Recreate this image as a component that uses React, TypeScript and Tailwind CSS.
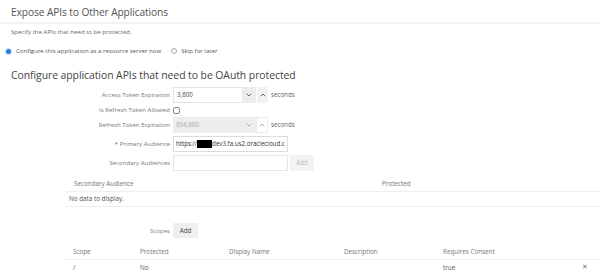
import React from "react";

function Chevron({ dir, color }: { dir: "up" | "down"; color: string }) {
  return (
    <svg width="6" height="4" viewBox="0 0 6 4" fill="none">
      {dir === "down" ? (
        <path d="M0.8 0.8 L3 3 L5.2 0.8" stroke={color} strokeWidth="1" />
      ) : (
        <path d="M0.8 3.2 L3 1 L5.2 3.2" stroke={color} strokeWidth="1" />
      )}
    </svg>
  );
}

function Label({ children }: { children: React.ReactNode }) {
  return (
    <div className="w-[170px] shrink-0 text-right text-[6.1px] leading-[8px] text-[#777]">
      {children}
    </div>
  );
}

export default function App() {
  return (
    <div className="w-[600px] h-[273px] overflow-hidden bg-white font-['Open_Sans','Liberation_Sans',sans-serif] text-[#555]">
      <div className="px-[11px] pt-[5px] pb-[3px] border-b-2 border-[#f3f3f3]">
        <div className="text-[10.2px] leading-[14px] text-[#555] tracking-[-0.1px]">
          Expose APIs to Other Applications
        </div>
      </div>
      <div className="mt-[4px] px-[11px] text-[6.1px] leading-[8px] text-[#666]">
        Specify the APIs that need to be protected.
      </div>
      <div className="mt-[10px] flex h-[10px] items-center pl-[5px] text-[6.1px] text-[#555]">
        <span className="ml-[1px] inline-block h-[5px] w-[5px] rounded-full bg-[#2d7be0] ring-1 ring-[#d3e3f8]" />
        <span className="ml-[5px]">Configure this application as a resource server now</span>
        <span className="ml-[10px] inline-block h-[6px] w-[6px] rounded-full border border-[#aaa]" />
        <span className="ml-[4px]">Skip for later</span>
      </div>
      <div className="mt-[12px] px-[11px] text-[10.4px] leading-[14px] text-[#444] tracking-[-0.05px]">
        Configure application APIs that need to be OAuth protected
      </div>

      <div className="mt-[5px] flex flex-col">
        <div className="flex h-[16px] items-center">
          <Label>Access Token Expiration</Label>
          <div className="ml-[3px] flex h-[16px] items-stretch">
            <div className="flex w-[69px] items-center border border-[#e3e3e3] border-r-0 px-[3px] text-[6.2px] text-[#444]">
              3,600
            </div>
            <div className="flex w-[14px] items-center justify-center bg-[#ececec]">
              <Chevron dir="down" color="#666" />
            </div>
            <div className="flex w-[12px] items-center justify-center border-l border-white bg-[#f2f2f2]">
              <Chevron dir="up" color="#666" />
            </div>
          </div>
          <span className="ml-[3px] text-[6.2px] text-[#666]">seconds</span>
        </div>

        <div className="mt-[1px] flex h-[12px] items-center">
          <Label>Is Refresh Token Allowed</Label>
          <span className="ml-[3px] inline-block h-[7px] w-[7px] rounded-[2px] border border-[#888]" />
        </div>

        <div className="mt-[1px] flex h-[16px] items-center">
          <Label>Refresh Token Expiration</Label>
          <div className="ml-[3px] flex h-[16px] items-stretch">
            <div className="flex w-[69px] items-center bg-[#ededed] px-[3px] text-[6.2px] text-[#aaa]">
              604,800
            </div>
            <div className="flex w-[14px] items-center justify-center bg-[#ededed]">
              <Chevron dir="down" color="#aaa" />
            </div>
            <div className="flex w-[12px] items-center justify-center border border-[#ececec] bg-white">
              <Chevron dir="up" color="#aaa" />
            </div>
          </div>
          <span className="ml-[3px] text-[6.2px] text-[#666]">seconds</span>
        </div>

        <div className="mt-[3px] flex h-[16px] items-center">
          <Label>
            <span className="mr-[2px] text-[#3a6db5]">*</span>Primary Audience
          </Label>
          <div className="ml-[3px] flex h-[16px] w-[115px] items-center overflow-hidden whitespace-nowrap border border-[#dcdcdc] px-[2px] text-[6.2px] text-[#333]">
            <span className="shrink-0">https://</span>
            <span className="inline-block h-[8px] w-[15px] shrink-0 bg-black" />
            <span className="shrink-0">dev3.fa.us2.oraclecloud.c</span>
          </div>
        </div>

        <div className="mt-[3px] flex h-[16px] items-center">
          <Label>Secondary Audiences</Label>
          <div className="ml-[3px] h-[16px] w-[115px] border border-[#e6e6e6]" />
          <div className="ml-[2px] flex h-[16px] w-[24px] items-center justify-center bg-[#f3f3f3] text-[6.2px] text-[#bbb]">
            Add
          </div>
        </div>
      </div>

      <div className="ml-[66px] mt-[6px] text-[6.3px]">
        <div className="flex h-[15px] items-center border-b border-[#efefef] text-[#777]">
          <div className="w-[308px] pl-[8px]">Secondary Audience</div>
          <div className="pl-[8px]">Protected</div>
        </div>
        <div className="flex h-[15px] items-center border-b border-[#efefef] pl-[3px] text-[#555]">
          No data to display.
        </div>
      </div>

      <div className="mt-[16px] flex h-[15px] items-center">
        <Label>Scopes</Label>
        <div className="ml-[3px] flex h-[15px] w-[25px] items-center justify-center rounded-[1px] bg-[#efefef] text-[6.3px] text-[#444]">
          Add
        </div>
      </div>

      <div className="ml-[66px] mt-[7px] text-[6.3px]">
        <div className="flex h-[15px] items-center border-b border-[#efefef] text-[#777]">
          <div className="w-[67px] pl-[7px]">Scope</div>
          <div className="w-[89px] pl-[7px]">Protected</div>
          <div className="w-[115px] pl-[7px]">Display Name</div>
          <div className="w-[99px] pl-[7px]">Description</div>
          <div className="w-[139px] pl-[7px]">Requires Consent</div>
        </div>
        <div className="flex h-[15px] items-center text-[#555]">
          <div className="w-[67px] pl-[7px]">/</div>
          <div className="w-[89px] pl-[7px]">No</div>
          <div className="w-[115px] pl-[7px]" />
          <div className="w-[99px] pl-[7px]" />
          <div className="w-[139px] pl-[7px]">true</div>
          <div className="pl-[7px] text-[7px] text-[#777]">✕</div>
        </div>
      </div>
    </div>
  );
}
